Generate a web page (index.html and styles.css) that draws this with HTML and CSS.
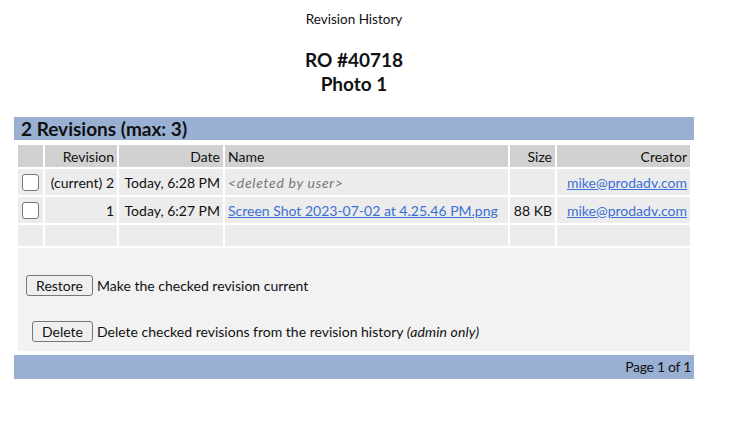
FILE: index.html
```html
<!DOCTYPE html>
<html lang="en">
<head>
<meta charset="utf-8">
<title>Revision History</title>
<link rel="stylesheet" href="styles.css">
</head>
<body>
<div class="page">
  <h1 class="doc-title">Revision History</h1>
  <h2 class="subject">RO #40718<br>Photo 1</h2>

  <div class="bar bar-top">2 Revisions (max: 3)</div>

  <table class="revtable">
    <colgroup>
      <col class="c-check">
      <col class="c-rev">
      <col class="c-date">
      <col class="c-name">
      <col class="c-size">
      <col class="c-creator">
    </colgroup>
    <thead>
      <tr class="head">
        <th></th>
        <th class="r">Revision</th>
        <th class="r">Date</th>
        <th class="l">Name</th>
        <th class="r">Size</th>
        <th class="r">Creator</th>
      </tr>
    </thead>
    <tbody>
      <tr class="row">
        <td class="chk"><span class="box"></span></td>
        <td class="r">(current) 2</td>
        <td class="r">Today, 6:28 PM</td>
        <td class="l deleted">&lt;deleted by user&gt;</td>
        <td class="r"></td>
        <td class="r"><a href="#">mike@prodadv.com</a></td>
      </tr>
      <tr class="row">
        <td class="chk"><span class="box"></span></td>
        <td class="r">1</td>
        <td class="r">Today, 6:27 PM</td>
        <td class="l"><a href="#">Screen Shot 2023-07-02 at 4.25.46 PM.png</a></td>
        <td class="r">88 KB</td>
        <td class="r"><a href="#">mike@prodadv.com</a></td>
      </tr>
      <tr class="row empty">
        <td></td><td></td><td></td><td></td><td></td><td></td>
      </tr>
      <tr>
        <td class="panel" colspan="6">
          <div class="actions">
            <div class="btn-cell"><button class="btn">Restore</button></div>
            <div class="desc">Make the checked revision current</div>
            <div class="btn-cell"><button class="btn">Delete</button></div>
            <div class="desc">Delete checked revisions from the revision history <em>(admin only)</em></div>
          </div>
        </td>
      </tr>
    </tbody>
  </table>

  <div class="bar bar-bottom">Page 1 of 1</div>
</div>
</body>
</html>
```

FILE: styles.css
```css
html, body {
  margin: 0;
  padding: 0;
  background: #ffffff;
}

body {
  font-family: Lato, "Noto Sans", "Liberation Sans", sans-serif;
  color: #111111;
  font-size: 14px;
}

.page {
  width: 680px;
  margin-left: 14px;
}

.doc-title {
  margin: 0;
  padding-top: 11px;
  font-size: 13.5px;
  line-height: 16px;
  font-weight: normal;
  text-align: center;
}

.subject {
  margin: 21px 0 0;
  font-size: 19px;
  line-height: 24px;
  font-weight: bold;
  text-align: center;
}

.bar {
  background: #99b0d3;
}

.bar-top {
  margin-top: 21px;
  height: 23px;
  line-height: 23px;
  padding-left: 7px;
  font-size: 19px;
  font-weight: bold;
}

.bar-bottom {
  margin-top: 2px;
  height: 24px;
  line-height: 24px;
  padding-right: 3px;
  text-align: right;
  font-size: 14px;
  letter-spacing: -0.3px;
}

.revtable {
  width: 676px;
  margin: 3px 2px 0;
  border-spacing: 2px;
  table-layout: fixed;
  font-size: 14px;
}

.c-check { width: 25px; }
.c-rev { width: 72px; }
.c-date { width: 104px; }
.c-size { width: 45px; }
.c-creator { width: 133px; }

.revtable th,
.revtable td {
  padding: 0 3px;
  white-space: nowrap;
  overflow: hidden;
}

.revtable th {
  background: #d1d1d1;
  font-weight: normal;
  height: 22px;
}

.row td {
  background: #ececec;
  height: 26px;
}

.row.empty td {
  height: 21px;
}

.r { text-align: right; }
.l { text-align: left; }

.chk {
  text-align: left;
}

.box {
  display: block;
  width: 15px;
  height: 15px;
  border: 1px solid #777777;
  border-radius: 3px;
  background: #ffffff;
  margin-left: 1px;
}

.deleted {
  color: #777777;
  font-style: italic;
  letter-spacing: 0.7px;
}

.revtable a {
  color: #3a6fd6;
  text-decoration: underline;
}

.revtable td.panel {
  background: #f2f2f2;
  padding: 27px 0 9px;
}

.actions {
  display: grid;
  grid-template-columns: 75px auto;
  column-gap: 4px;
  row-gap: 25px;
  align-items: center;
}

.btn-cell {
  display: flex;
  justify-content: flex-end;
}

.btn {
  font-family: Lato, "Noto Sans", "Liberation Sans", sans-serif;
  font-size: 14px;
  height: 21px;
  padding: 0 9px;
  background: #efefef;
  border: 1px solid #767676;
  border-radius: 3px;
  color: #111111;
  line-height: 19px;
}

.desc {
  font-size: 14px;
}

.desc em {
  font-style: italic;
  letter-spacing: 0.15px;
}
```
